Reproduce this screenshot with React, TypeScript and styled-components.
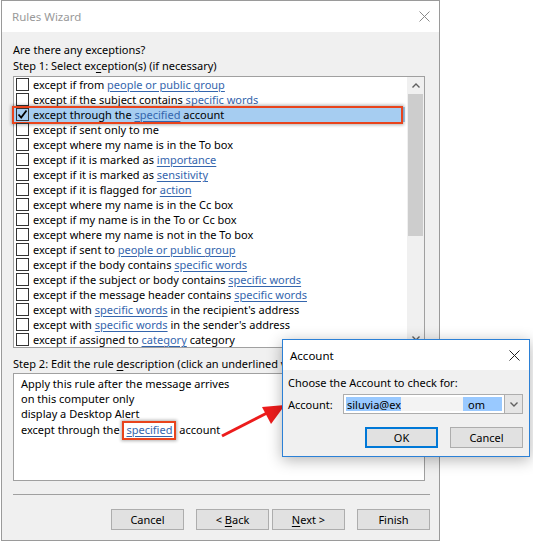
import styled, {createGlobalStyle} from 'styled-components';

type Part = string | {link: string};

interface Exception {
    parts: Part[];
    checked?: boolean;
}

const exceptions: Exception[] = [
    {parts: ['except if from ', {link: 'people or public group'}]},
    {parts: ['except if the subject contains ', {link: 'specific words'}]},
    {parts: ['except through the ', {link: 'specified'}, ' account'], checked: true},
    {parts: ['except if sent only to me']},
    {parts: ['except where my name is in the To box']},
    {parts: ['except if it is marked as ', {link: 'importance'}]},
    {parts: ['except if it is marked as ', {link: 'sensitivity'}]},
    {parts: ['except if it is flagged for ', {link: 'action'}]},
    {parts: ['except where my name is in the Cc box']},
    {parts: ['except if my name is in the To or Cc box']},
    {parts: ['except where my name is not in the To box']},
    {parts: ['except if sent to ', {link: 'people or public group'}]},
    {parts: ['except if the body contains ', {link: 'specific words'}]},
    {parts: ['except if the subject or body contains ', {link: 'specific words'}]},
    {parts: ['except if the message header contains ', {link: 'specific words'}]},
    {parts: ['except with ', {link: 'specific words'}, " in the recipient's address"]},
    {parts: ['except with ', {link: 'specific words'}, " in the sender's address"]},
    {parts: ['except if assigned to ', {link: 'category'}, ' category']},
];

const renderParts = (parts: Part[]) =>
    parts.map((part, i) =>
        typeof part === 'string' ? <span key={i}>{part}</span> : <Link key={i}>{part.link}</Link>,
    );

const CloseIcon = ({color}: {color: string}) => (
    <svg width='11' height='11' viewBox='0 0 11 11'>
        <path d='M0.5 0.5 L10.5 10.5 M10.5 0.5 L0.5 10.5' stroke={color} strokeWidth='1' fill='none' />
    </svg>
);

const Chevron = ({up}: {up?: boolean}) => (
    <svg width='8' height='5' viewBox='0 0 8 5'>
        <path d={up ? 'M0.5 4.5 L4 1 L7.5 4.5' : 'M0.5 0.5 L4 4 L7.5 0.5'} stroke='#606060' strokeWidth='1.4' fill='none' />
    </svg>
);

const CheckMark = () => (
    <svg width='11' height='11' viewBox='0 0 11 11'>
        <path d='M1.5 5.5 L4.2 8.5 L9.5 1.5' stroke='#000' strokeWidth='1.8' fill='none' />
    </svg>
);

const App = () => {
    return (
        <Page>
            <GlobalStyle />
            <Window>
                <TitleBar>
                    <TitleText $inactive>Rules Wizard</TitleText>
                    <CloseIcon color='#8a8a8a' />
                </TitleBar>
                <Body>
                    <Line>Are there any exceptions?</Line>
                    <Line>
                        Step 1: Select ex<u>c</u>eption(s) (if necessary)
                    </Line>
                    <ListBox>
                        <Rows>
                            {exceptions.map((item, i) => (
                                <Row key={i} $selected={item.checked}>
                                    <CheckBox>{item.checked && <CheckMark />}</CheckBox>
                                    <span>{renderParts(item.parts)}</span>
                                </Row>
                            ))}
                        </Rows>
                        <ScrollBar>
                            <ScrollArrow>
                                <Chevron up />
                            </ScrollArrow>
                            <Track>
                                <Thumb />
                            </Track>
                            <ScrollArrow>
                                <Chevron />
                            </ScrollArrow>
                        </ScrollBar>
                    </ListBox>
                    <StepTwo>
                        Step 2: Edit the rule <u>d</u>escription (click an underlined value)
                    </StepTwo>
                    <DescBox>
                        <div>Apply this rule after the message arrives</div>
                        <div>on this computer only</div>
                        <div>display a Desktop Alert</div>
                        <div>
                            {'except through the '}
                            <Marked>
                                <Link>specified</Link>
                            </Marked>
                            {' account'}
                        </div>
                    </DescBox>
                    <Separator />
                    <Buttons>
                        <Button $spaced>Cancel</Button>
                        <Button>
                            {'< '}
                            <u>B</u>ack
                        </Button>
                        <Button $spaced>
                            <u>N</u>ext{' >'}
                        </Button>
                        <Button>Finish</Button>
                    </Buttons>
                </Body>
            </Window>

            <Pointer width='70' height='50' viewBox='0 0 70 50'>
                <path d='M2 45 L47 22' stroke='#ec1c1c' strokeWidth='3' fill='none' />
                <path d='M65 14 L42 16 L51 33 Z' fill='#ec1c1c' />
            </Pointer>

            <Dialog>
                <TitleBar $small>
                    <TitleText>Account</TitleText>
                    <CloseIcon color='#222' />
                </TitleBar>
                <DialogBody>
                    <Line>Choose the Account to check for:</Line>
                    <Field>
                        <span>Account:</span>
                        <Combo>
                            <ComboValue>
                                siluvia@ex<Redacted />om
                            </ComboValue>
                            <ComboButton>
                                <Chevron />
                            </ComboButton>
                        </Combo>
                    </Field>
                    <DialogButtons>
                        <Button $default>OK</Button>
                        <Button>Cancel</Button>
                    </DialogButtons>
                </DialogBody>
            </Dialog>
        </Page>
    );
};

export default App;

const GlobalStyle = createGlobalStyle`
    body {
        margin: 0;
        background: #fff;
        font-family: "Noto Sans", "DejaVu Sans", sans-serif;
        font-size: 11px;
        color: #000;
    }
    u {
        text-decoration-thickness: 1px;
        text-underline-offset: 2px;
    }
`;

const Page = styled.div`
    position: relative;
    width: 533px;
    height: 543px;
    overflow: hidden;
    background: #fff;
`;

const Window = styled.div`
    margin-left: 1px;
    width: 437px;
    border: 1px solid #9a9a9a;
    background: #f0f0f0;
`;

const TitleBar = styled.div<{$small?: boolean}>`
    display: flex;
    align-items: center;
    justify-content: space-between;
    height: ${({$small}) => ($small ? 30 : 31)}px;
    padding: 0 9px 0 ${({$small}) => ($small ? 7 : 10)}px;
    background: #fff;
`;

const TitleText = styled.span<{$inactive?: boolean}>`
    font-size: 11.5px;
    color: ${({$inactive}) => ($inactive ? '#999' : '#000')};
`;

const Body = styled.div`
    display: flex;
    flex-direction: column;
    padding: 10px 9px 10px 11px;
`;

const Line = styled.div`
    line-height: 16px;
    white-space: nowrap;
`;

const Link = styled.span`
    color: #3465ad;
    text-decoration: underline;
    text-underline-offset: 2px;
`;

const ListBox = styled.div`
    display: flex;
    margin: 2px 5px 0 0;
    border: 1px solid #a0a0a0;
    background: #fff;
`;

const Rows = styled.div`
    flex: 1;
    display: flex;
    flex-direction: column;
    padding-right: 2px;
`;

const Row = styled.div<{$selected?: boolean}>`
    position: relative;
    display: flex;
    align-items: center;
    gap: 4px;
    height: 15px;
    line-height: 15px;
    padding-left: 2px;
    white-space: nowrap;
    background: ${({$selected}) => ($selected ? '#a6cdf1' : 'transparent')};

    &::after {
        content: '';
        display: ${({$selected}) => ($selected ? 'block' : 'none')};
        position: absolute;
        inset: -1px 2px -2px -2px;
        border: 2px solid #e9441c;
        box-shadow: 0 0 3px 1px rgba(0, 0, 0, 0.3);
    }
`;

const CheckBox = styled.span`
    display: flex;
    align-items: center;
    justify-content: center;
    width: 11px;
    height: 11px;
    border: 1px solid #333;
    background: transparent;
`;

const ScrollBar = styled.div`
    display: flex;
    flex-direction: column;
    width: 17px;
    background: #f0f0f0;
`;

const ScrollArrow = styled.div`
    display: flex;
    align-items: center;
    justify-content: center;
    height: 17px;
`;

const Track = styled.div`
    flex: 1;
    padding: 0 1px;
`;

const Thumb = styled.div`
    height: 142px;
    background: #cdcdcd;
`;

const StepTwo = styled(Line)`
    margin-top: 8px;
`;

const DescBox = styled.div`
    height: 102px;
    margin: 1px 5px 0 0;
    padding: 2px 7px;
    border: 1px solid #a0a0a0;
    background: #fff;
    line-height: 15px;
    white-space: nowrap;
`;

const Marked = styled.span`
    display: inline-block;
    line-height: 12px;
    padding: 1px 2px 2px;
    border: 2px solid #e9441c;
    box-shadow: 0 0 3px 1px rgba(0, 0, 0, 0.3);
`;

const Separator = styled.div`
    height: 1px;
    margin-top: 13px;
    background: #a0a0a0;
`;

const Buttons = styled.div`
    display: flex;
    justify-content: flex-end;
    gap: 3px;
    margin-top: 14px;
`;

const Button = styled.div<{$spaced?: boolean; $default?: boolean}>`
    display: flex;
    align-items: center;
    justify-content: center;
    white-space: pre;
    box-sizing: border-box;
    width: 73px;
    height: 21px;
    margin-right: ${({$spaced}) => ($spaced ? 9 : 0)}px;
    border: ${({$default}) => ($default ? '2px solid #0078d7' : '1px solid #adadad')};
    background: #e1e1e1;
`;

const Pointer = styled.svg`
    position: absolute;
    left: 220px;
    top: 391px;
`;

const Dialog = styled.div`
    position: absolute;
    left: 282px;
    top: 339px;
    width: 246px;
    border: 1px solid #2b80d6;
    background: #f0f0f0;
    box-shadow: 0 3px 14px rgba(0, 0, 0, 0.3);
`;

const DialogBody = styled.div`
    display: flex;
    flex-direction: column;
    padding: 5px 6px 8px 5px;
`;

const Field = styled.div`
    display: flex;
    align-items: center;
    justify-content: space-between;
    margin-top: 3px;
`;

const Combo = styled.div`
    display: flex;
    width: 180px;
    height: 20px;
    box-sizing: border-box;
    border: 1px solid #adadad;
    background: #fff;
`;

const ComboValue = styled.div`
    flex: 1;
    display: flex;
    align-items: center;
    margin: 2px;
    padding-left: 1px;
    background: #99c9ff;
    white-space: nowrap;
`;

const Redacted = styled.span`
    width: 62px;
    height: 14px;
    margin-right: 5px;
    background: #f3f3f3;
`;

const ComboButton = styled.div`
    display: flex;
    align-items: center;
    justify-content: center;
    width: 17px;
    border-left: 1px solid #adadad;
    background: #e5e5e5;
`;

const DialogButtons = styled.div`
    display: flex;
    justify-content: flex-end;
    gap: 12px;
    margin-top: 13px;
`;
